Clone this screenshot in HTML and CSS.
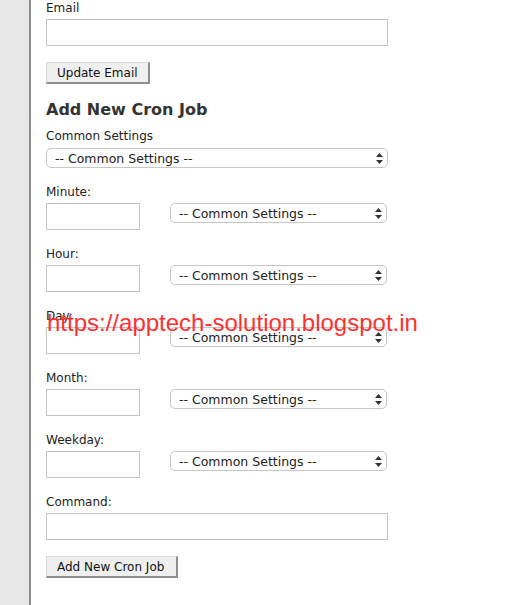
FILE: index.html
```html
<!DOCTYPE html>
<html lang="en">
<head>
    <meta charset="UTF-8">
    <title>Cron Jobs</title>
    <link rel="stylesheet" href="styles.css">
</head>
<body>
    <div class="sidebar"></div>

    <div class="main">
        <!-- Email -->
        <label class="field-label">Email</label>
        <input type="text" class="text-input wide">
        <button class="btn">Update Email</button>

        <h2>Add New Cron Job</h2>

        <label class="field-label common-label">Common Settings</label>
        <div class="select-wrap wide-select">
            <select><option>-- Common Settings --</option></select>
            <svg class="arrows" width="7" height="11" viewBox="0 0 7 11"><path d="M3.5 0 L7 4 L0 4 Z M3.5 11 L7 7 L0 7 Z" fill="#333"/></svg>
        </div>

        <div class="field">
            <label class="field-label">Minute:</label>
            <div class="field-row">
                <input type="text" class="text-input short">
                <div class="select-wrap"><select><option>-- Common Settings --</option></select>
                <svg class="arrows" width="7" height="11" viewBox="0 0 7 11"><path d="M3.5 0 L7 4 L0 4 Z M3.5 11 L7 7 L0 7 Z" fill="#333"/></svg></div>
            </div>
        </div>

        <div class="field">
            <label class="field-label">Hour:</label>
            <div class="field-row">
                <input type="text" class="text-input short">
                <div class="select-wrap"><select><option>-- Common Settings --</option></select>
                <svg class="arrows" width="7" height="11" viewBox="0 0 7 11"><path d="M3.5 0 L7 4 L0 4 Z M3.5 11 L7 7 L0 7 Z" fill="#333"/></svg></div>
            </div>
        </div>

        <div class="field">
            <label class="field-label">Day:</label>
            <div class="field-row">
                <input type="text" class="text-input short">
                <div class="select-wrap"><select><option>-- Common Settings --</option></select>
                <svg class="arrows" width="7" height="11" viewBox="0 0 7 11"><path d="M3.5 0 L7 4 L0 4 Z M3.5 11 L7 7 L0 7 Z" fill="#333"/></svg></div>
            </div>
        </div>

        <div class="field">
            <label class="field-label">Month:</label>
            <div class="field-row">
                <input type="text" class="text-input short">
                <div class="select-wrap"><select><option>-- Common Settings --</option></select>
                <svg class="arrows" width="7" height="11" viewBox="0 0 7 11"><path d="M3.5 0 L7 4 L0 4 Z M3.5 11 L7 7 L0 7 Z" fill="#333"/></svg></div>
            </div>
        </div>

        <div class="field">
            <label class="field-label">Weekday:</label>
            <div class="field-row">
                <input type="text" class="text-input short">
                <div class="select-wrap"><select><option>-- Common Settings --</option></select>
                <svg class="arrows" width="7" height="11" viewBox="0 0 7 11"><path d="M3.5 0 L7 4 L0 4 Z M3.5 11 L7 7 L0 7 Z" fill="#333"/></svg></div>
            </div>
        </div>

        <label class="field-label">Command:</label>
        <input type="text" class="text-input wide">
        <button class="btn btn-cron">Add New Cron Job</button>

        <!-- watermark -->
        <div class="watermark">https://apptech-solution.blogspot.in</div>
    </div>
</body>
</html>
```

FILE: styles.css
```css
body {
    margin: 0;
    display: flex;
    min-height: 605px;
    font-family: "DejaVu Sans", Verdana, sans-serif;
    font-size: 12px;
    color: #222;
    background: #fff;
}

.sidebar {
    width: 29px;
    background-color: #e6e6e6;
    border-right: 2px solid #8c8c8c;
    flex-shrink: 0;
}

.main {
    position: relative;
    padding-left: 15px;
    display: flex;
    flex-direction: column;
    align-items: flex-start;
    width: 342px;
}

.field-label {
    display: block;
    height: 14px;
    line-height: 14px;
    margin-top: 1px;
    margin-bottom: 4px;
}

/* Inputs */
.text-input {
    box-sizing: border-box;
    height: 27px;
    border: 1px solid #c4c4c4;
    margin: 0;
    padding: 2px 4px;
    background: #fff;
}

.wide {
    width: 342px;
}

.short {
    width: 94px;
}

.btn {
    margin-top: 16px;
    height: 22px;
    padding: 0 10px;
    font-family: "DejaVu Sans", Verdana, sans-serif;
    font-size: 12px;
    color: #111;
    background-color: #efefef;
    border: 1px solid #d9d9d9;
    border-right: 2px solid #8e8e8e;
    border-bottom: 2px solid #8e8e8e;
}

.btn-cron {
    padding: 0 12px 0 10px;
}

h2 {
    margin: 16px 0 9px 0;
    font-size: 16px;
    line-height: 20px;
    font-weight: bold;
    color: #333;
}

.common-label {
    margin-top: 0;
}

/* Selects */
.select-wrap {
    position: relative;
    width: 217px;
    height: 20px;
}

.wide-select {
    width: 342px;
    margin-top: 1px;
}

.select-wrap select {
    appearance: none;
    -webkit-appearance: none;
    box-sizing: border-box;
    width: 100%;
    height: 20px;
    margin: 0;
    padding: 0 0 0 8px;
    border: 1px solid #c6c6c6;
    border-radius: 5px;
    background: #fff;
    font-family: "DejaVu Sans", Verdana, sans-serif;
    font-size: 12.5px;
    color: #222;
}

.arrows {
    position: absolute;
    right: 5px;
    top: 5px;
    pointer-events: none;
}

.field {
    margin-top: 16px;
}

.field-row {
    display: flex;
    gap: 30px;
}

.field + .field {
    margin-top: 16px;
}

.field + .field-label {
    margin-top: 17px;
}

.watermark {
    position: absolute;
    left: 16px;
    top: 309px;
    font-family: "Liberation Sans", Arial, sans-serif;
    font-size: 24px;
    color: #ff3030;
    white-space: nowrap;
}
```
